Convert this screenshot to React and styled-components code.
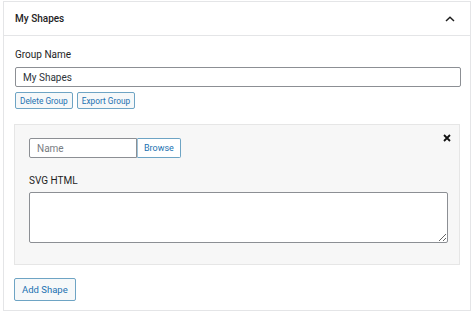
import React from "react";
import styled, { createGlobalStyle } from "styled-components";

const GlobalStyle = createGlobalStyle`
  body {
    margin: 0;
    background: #fff;
    font-family: Roboto, "Liberation Sans", sans-serif;
    color: #1e1e1e;
  }
`;

const Panel = styled.section`
  margin: 1px 3px 0 3px;
  width: 466px;
  border: 1px solid #e4e5e7;
  background: #fff;
`;

const Header = styled.div`
  height: 33px;
  display: flex;
  align-items: center;
  justify-content: space-between;
  padding: 0 15px 0 11px;
  border-bottom: 1px solid #e4e5e7;
`;

const Title = styled.h2`
  margin: 0;
  font-size: 10px;
  font-weight: 500;
  color: #1e1e1e;
`;

const Body = styled.div`
  padding: 12px 10px 9px 10px;
`;

const Label = styled.div`
  font-size: 10px;
  color: #1e1e1e;
  margin: ${(p) => p.$m || "0"};
  line-height: 14px;
`;

const TextInput = styled.input`
  box-sizing: border-box;
  display: block;
  height: 20px;
  width: ${(p) => p.$w || "100%"};
  margin: ${(p) => p.$m || "0"};
  border: 1px solid #8c8f94;
  border-radius: ${(p) => (p.$joined ? "2px 0 0 2px" : "2px")};
  padding: 0 7px;
  font-family: inherit;
  font-size: 10px;
  color: #2c3338;
  background: #fff;
  &::placeholder {
    color: #787c82;
  }
`;

const ButtonRow = styled.div`
  display: flex;
  gap: 4px;
  margin: 5px 0 0 1px;
`;

const Button = styled.button`
  box-sizing: border-box;
  height: ${(p) => p.$h || "17px"};
  padding: 0 ${(p) => p.$px || "4px"};
  border: 1px solid #6ea4c4;
  border-radius: 2px;
  background: #f6f8f9;
  color: #2271b1;
  font-family: inherit;
  font-size: ${(p) => p.$fs || "8.3px"};
  cursor: pointer;
`;

const ShapeBox = styled.div`
  position: relative;
  margin-top: 15px;
  background: #f7f7f7;
  border: 1px solid #e6e6e6;
  padding: 13px 12px 21px 14px;
`;

const NameRow = styled.div`
  display: flex;
`;

const BrowseButton = styled(Button)`
  height: 20px;
  border-radius: 0 2px 2px 0;
  border-left: 1px solid #9ec3d9;
  background: #fff;
  font-size: 9px;
  padding: 0 6px;
`;

const Close = styled.button`
  position: absolute;
  top: 7px;
  right: 6px;
  border: none;
  background: none;
  padding: 0;
  width: 12px;
  height: 12px;
  display: flex;
  align-items: center;
  justify-content: center;
  cursor: pointer;
`;

const TextArea = styled.textarea`
  box-sizing: border-box;
  display: block;
  width: 419px;
  height: 51px;
  margin-top: 4px;
  border: 1px solid #8c8f94;
  border-radius: 2px;
  background: #fff;
  font-family: inherit;
`;

const Footer = styled.div`
  margin-top: 13px;
`;

export default function App() {
  return (
    <>
      <GlobalStyle />
      <Panel>
        <Header>
          <Title>My Shapes</Title>
          <svg width="10" height="6" viewBox="0 0 10 6">
            <path d="M1 5 L5 1.3 L9 5" fill="none" stroke="#1e1e1e" strokeWidth="1.5" />
          </svg>
        </Header>
        <Body>
          <Label $m="0 0 0 1px">Group Name</Label>
          <TextInput defaultValue="My Shapes" $m="5px 0 0 1px" />
          <ButtonRow>
            <Button>Delete Group</Button>
            <Button>Export Group</Button>
          </ButtonRow>
          <ShapeBox>
            <Close aria-label="Remove">
              <svg width="8" height="8" viewBox="0 0 8 8">
                <path d="M1 1 L7 7 M7 1 L1 7" stroke="#111" strokeWidth="1.8" />
              </svg>
            </Close>
            <NameRow>
              <TextInput placeholder="Name" $w="108px" $joined />
              <BrowseButton>Browse</BrowseButton>
            </NameRow>
            <Label $m="16px 0 0 0">SVG HTML</Label>
            <TextArea />
          </ShapeBox>
          <Footer>
            <Button $h="23px" $px="7px" $fs="9.5px">Add Shape</Button>
          </Footer>
        </Body>
      </Panel>
    </>
  );
}
